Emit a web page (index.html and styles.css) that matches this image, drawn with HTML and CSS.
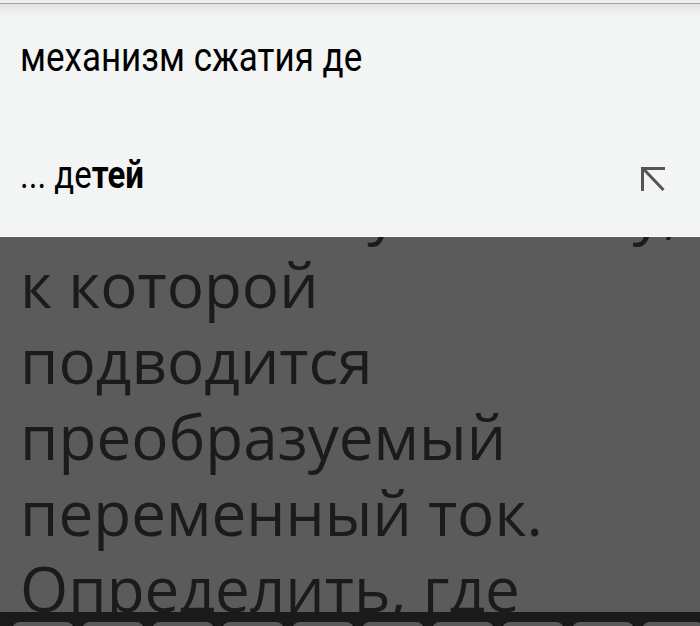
FILE: index.html
```html
<!DOCTYPE html>
<html lang="ru">
<head>
<meta charset="utf-8">
<link rel="stylesheet" href="styles.css">
</head>
<body>
<div class="screen">
  <div class="content">
    <p class="question">Первичной обмоткой<br>трансформатора<br>называют ту обмотку,<br>к которой<br>подводится<br>преобразуемый<br>переменный ток.<br>Определить, где</p>
  </div>

  <div class="suggest">
    <div class="suggest-top"></div>
    <div class="query"><span class="tall">механизм сжатия де</span></div>
    <div class="hint">
      <span class="hint-text tall">... де<b>тей</b></span>
      <svg class="fill-icon" width="26" height="26" viewBox="0 0 26 26" aria-hidden="true">
        <path d="M2.5 3.5 H25 M2.5 2 V26 M3.5 4 L23.5 25" fill="none" stroke="#555555" stroke-width="3"/>
      </svg>
    </div>
  </div>

  <div class="keyboard">
    <span class="key"></span><span class="key"></span><span class="key"></span><span class="key"></span><span class="key"></span>
    <span class="key"></span><span class="key"></span><span class="key"></span><span class="key"></span><span class="key"></span>
  </div>
</div>
</body>
</html>
```

FILE: styles.css
```css
html, body {
  margin: 0;
  padding: 0;
}

body {
  width: 700px;
  height: 626px;
  overflow: hidden;
  background: #5b5b5b;
}

.screen {
  position: relative;
  width: 700px;
  height: 626px;
  overflow: hidden;
  background: #5b5b5b;
}

.content {
  padding: 0 20px;
}

.question {
  margin: 18px 0 0 0;
  font-family: "Open Sans", "Noto Sans", sans-serif;
  font-size: 62px;
  line-height: 76px;
  color: #1b1b1b;
  white-space: nowrap;
}

.suggest {
  position: absolute;
  left: 0;
  top: 0;
  width: 700px;
  height: 237px;
  background: #f3f4f4;
  border-bottom: 1px solid #fbfbfb;
  box-sizing: border-box;
  font-family: Roboto, "Noto Sans", sans-serif;
  color: #000;
}

.suggest-top {
  height: 16px;
  border-top: 3px solid #efefef;
  box-sizing: border-box;
  background: linear-gradient(#a3a3a3 0, #a3a3a3 1px, #e2e3e3 1px, #f3f4f4 100%);
}

.tall {
  display: inline-block;
  transform: scaleY(1.15);
  transform-origin: 0 75%;
}

.query {
  padding: 22px 0 0 20px;
  font-size: 35px;
  line-height: 44px;
  height: 44px;
}

.hint {
  display: flex;
  align-items: center;
  justify-content: space-between;
  padding: 73px 34px 0 20px;
}

.hint-text {
  font-size: 33px;
  line-height: 44px;
}

.hint-text b {
  font-weight: 700;
}

.fill-icon {
  display: block;
  margin-top: 2px;
}

.keyboard {
  position: absolute;
  left: 0;
  bottom: 0;
  width: 700px;
  height: 14px;
  background: #1a1a1a;
  display: flex;
  gap: 8px;
  padding: 10px 0 0 12px;
  box-sizing: border-box;
  overflow: hidden;
}

.key {
  flex: 0 0 62px;
  height: 30px;
  border-radius: 8px;
  background: #5a5a5a;
}
```
